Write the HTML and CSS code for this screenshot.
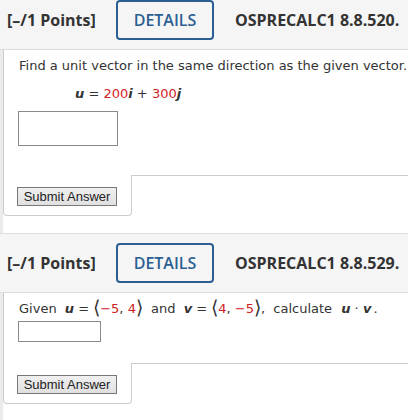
FILE: index.html
```html
<!DOCTYPE html>
<html lang="en">
<head>
<meta charset="utf-8">
<title>Questions</title>
<link rel="stylesheet" href="styles.css">
</head>
<body>
<div class="page">
  <section class="question">
    <div class="qhead">
      <span class="points">[–/1 Points]</span>
      <button class="details">DETAILS</button>
      <span class="qid">OSPRECALC1 8.8.520.</span>
    </div>
    <div class="qbody">
      <p class="prompt">Find a unit vector in the same direction as the given vector.</p>
      <p class="math-line"><b class="vec">u</b> = <span class="red">200</span><b class="vec">i</b> + <span class="red">300</span><b class="vec">j</b></p>
      <input class="answer answer-big" type="text">
    </div>
    <div class="submit-row">
      <div class="submit-box"><button class="submit">Submit Answer</button></div>
      <div class="submit-fill"></div>
    </div>
  </section>

  <section class="question">
    <div class="qhead">
      <span class="points">[–/1 Points]</span>
      <button class="details">DETAILS</button>
      <span class="qid">OSPRECALC1 8.8.529.</span>
    </div>
    <div class="qbody qbody-2">
      <p class="prompt">Given <span class="m"><b class="vec">u</b> = <span class="br">⟨</span><span class="red">−5</span>, <span class="red">4</span><span class="br">⟩</span></span> and <span class="m"><b class="vec">v</b> = <span class="br">⟨</span><span class="red">4</span>, <span class="red">−5</span><span class="br">⟩</span>,</span> calculate <span class="m m-last"><b class="vec">u</b> · <b class="vec">v</b></span>.</p>
      <input class="answer answer-small" type="text">
    </div>
    <div class="submit-row">
      <div class="submit-box"><button class="submit">Submit Answer</button></div>
      <div class="submit-fill"></div>
    </div>
  </section>
</div>
</body>
</html>
```

FILE: styles.css
```css
html, body {
  margin: 0;
  padding: 0;
}
body {
  background: linear-gradient(to right, #ebebeb 0, #ebebeb 3px, #ffffff 3px);
  color: #333;
  overflow: hidden;
}
.page {
  margin-top: -10px;
}
.question {
  margin-bottom: 17px;
}
.qhead {
  display: flex;
  align-items: center;
  background: #f5f5f5;
  border-top: 1px solid #dddddd;
  border-bottom: 1px solid #dddddd;
  padding: 9px 0 9px 7px;
  font-family: "Open Sans", sans-serif;
  font-size: 16px;
  color: #333;
  white-space: nowrap;
}
.points {
  font-weight: 700;
  width: 88px;
}
.details {
  box-sizing: border-box;
  width: 98px;
  height: 40px;
  margin-left: 21px;
  margin-right: 21px;
  border: 2px solid #2b5f93;
  border-radius: 4px;
  background: transparent;
  color: #2b5f93;
  font-family: "Open Sans", sans-serif;
  font-size: 16px;
  font-weight: 600;
  padding: 0;
}
.qid {
  font-weight: 700;
}
.qbody {
  margin-left: 3px;
  border-left: 1px solid #cccccc;
  padding: 8px 0 29px 15px;
  font-family: "DejaVu Sans", Verdana, sans-serif;
  font-size: 13px;
  color: #333;
  background: #fff;
}
.prompt {
  margin: 0;
  line-height: 16px;
  white-space: nowrap;
}
.math-line {
  margin: 12px 0 0 56px;
  line-height: 16px;
}
.vec {
  font-style: italic;
  font-weight: 700;
}
.red {
  color: #d0231f;
}
.answer {
  display: block;
  box-sizing: border-box;
  margin: 0 0 0 -1px;
  border: 1px solid #8a8a8a;
  border-radius: 0;
  background: #fff;
  padding: 0;
}
.answer-big {
  width: 100px;
  height: 35px;
  margin-top: 9px;
}
.answer-small {
  width: 83px;
  height: 21px;
  margin-top: 4px;
}
.qbody-2 {
  padding-top: 8px;
  padding-bottom: 21px;
}
.m {
  margin: 0 4px;
}
.m-last {
  margin-left: 5px;
  margin-right: 2px;
}
.br {
  font-size: 19px;
  font-weight: 200;
  line-height: 0;
  vertical-align: -1px;
}
.submit-row {
  display: flex;
  align-items: flex-start;
  margin-left: 3px;
  background: #fff;
}
.submit-box {
  box-sizing: border-box;
  width: 129px;
  border: 1px solid #cccccc;
  border-top: none;
  border-radius: 0 0 4px 4px;
  padding: 12px 0 9px 13px;
}
.submit-fill {
  flex: 1;
  border-top: 1px solid #cccccc;
}
.submit {
  box-sizing: border-box;
  width: 100px;
  height: 19px;
  padding: 0;
  border: 1px solid #777;
  border-radius: 0;
  background: linear-gradient(#f0f0f0, #e0e0e0);
  font-family: "Liberation Sans", Arial, sans-serif;
  font-size: 13px;
  color: #222;
  line-height: 17px;
}
```
